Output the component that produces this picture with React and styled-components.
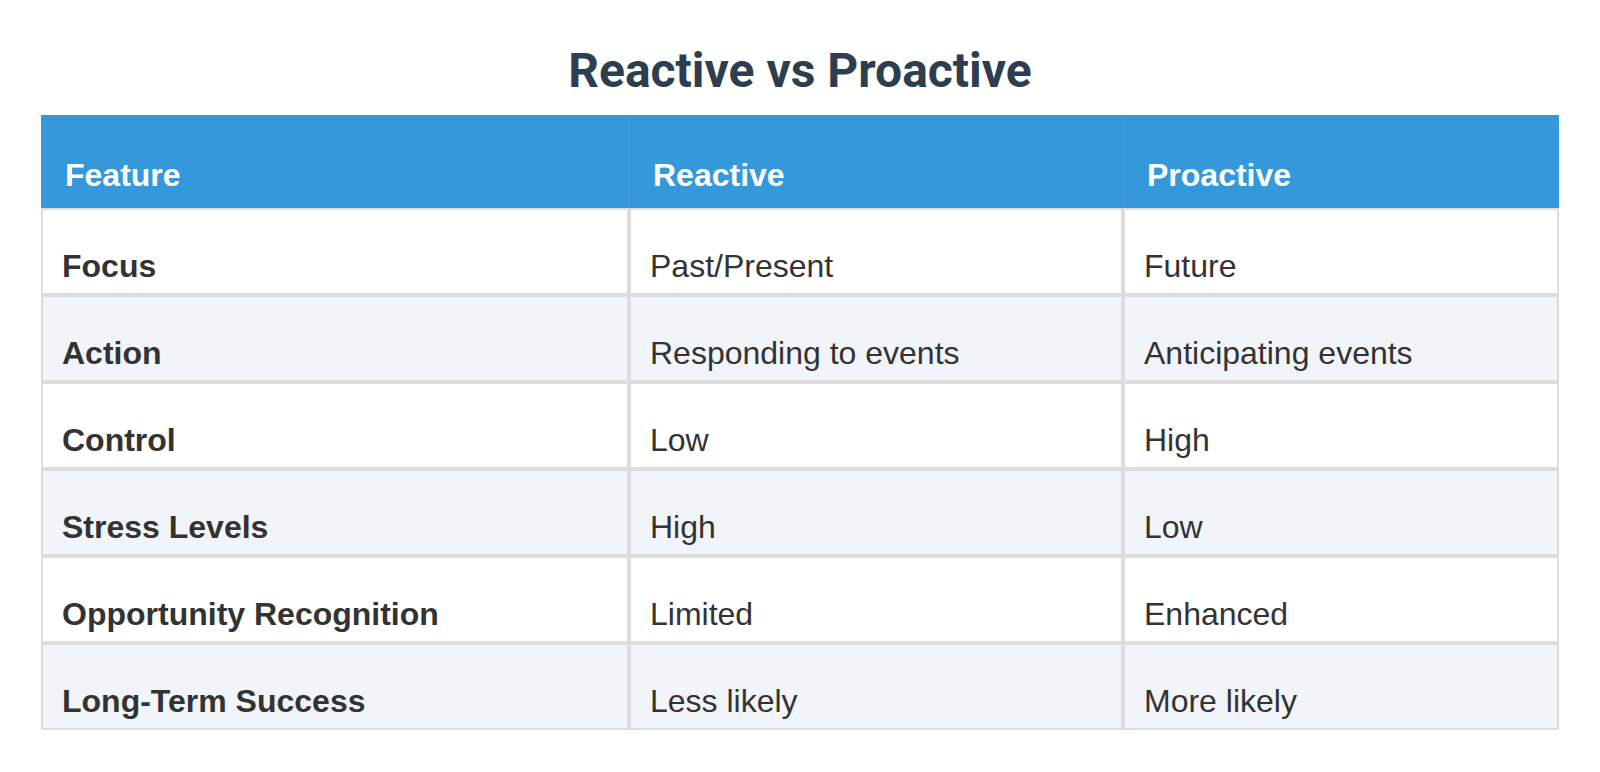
import React from "react";
import styled, { createGlobalStyle } from "styled-components";

const rows = [
  { feature: "Focus", reactive: "Past/Present", proactive: "Future" },
  { feature: "Action", reactive: "Responding to events", proactive: "Anticipating events" },
  { feature: "Control", reactive: "Low", proactive: "High" },
  { feature: "Stress Levels", reactive: "High", proactive: "Low" },
  { feature: "Opportunity Recognition", reactive: "Limited", proactive: "Enhanced" },
  { feature: "Long-Term Success", reactive: "Less likely", proactive: "More likely" },
];

const columns = [
  { id: "feature", label: "Feature", width: 588 },
  { id: "reactive", label: "Reactive", width: 494 },
  { id: "proactive", label: "Proactive", width: 436 },
];

const GlobalStyle = createGlobalStyle`
  html, body {
    margin: 0;
    padding: 0;
    background: #ffffff;
  }
  body {
    font-family: "Liberation Sans", Arial, sans-serif;
    color: #333333;
  }
`;

const Page = styled.div`
  padding: 44px 41px 40px;
`;

const Title = styled.h1`
  margin: 0 0 17px;
  text-align: center;
  font-family: Roboto, "Liberation Sans", sans-serif;
  font-weight: 700;
  font-size: 48px;
  line-height: 54px;
  color: #2c3e50;
`;

const Table = styled.table`
  width: 100%;
  table-layout: fixed;
  border-collapse: separate;
  border-spacing: 0;
  font-size: 32px;
`;

const HeadCell = styled.th`
  background: #3498db;
  color: #ffffff;
  font-weight: 700;
  text-align: left;
  padding: 42px 20px 14px 24px;
  border-right: 1px solid rgba(255, 255, 255, 0.08);

  &:last-child {
    border-right: none;
  }
`;

const Row = styled.tr`
  background: ${({ $striped }) => ($striped ? "#f1f5fa" : "#ffffff")};
`;

const Cell = styled.td`
  border: 2px solid #dddddd;
  padding: 38px 18px 8px 19px;
  font-weight: ${({ $bold }) => ($bold ? 700 : 400)};
  color: #333333;
`;

const App = () => (
  <>
    <GlobalStyle />
    <Page>
      <Title>Reactive vs Proactive</Title>
      <Table>
        <colgroup>
          {columns.map((c) => (
            <col key={c.id} style={{ width: c.width }} />
          ))}
        </colgroup>
        <thead>
          <tr>
            {columns.map((c) => (
              <HeadCell key={c.id}>{c.label}</HeadCell>
            ))}
          </tr>
        </thead>
        <tbody>
          {rows.map((r, i) => (
            <Row key={r.feature} $striped={i % 2 === 1}>
              <Cell $bold>{r.feature}</Cell>
              <Cell>{r.reactive}</Cell>
              <Cell>{r.proactive}</Cell>
            </Row>
          ))}
        </tbody>
      </Table>
    </Page>
  </>
);

export default App;
